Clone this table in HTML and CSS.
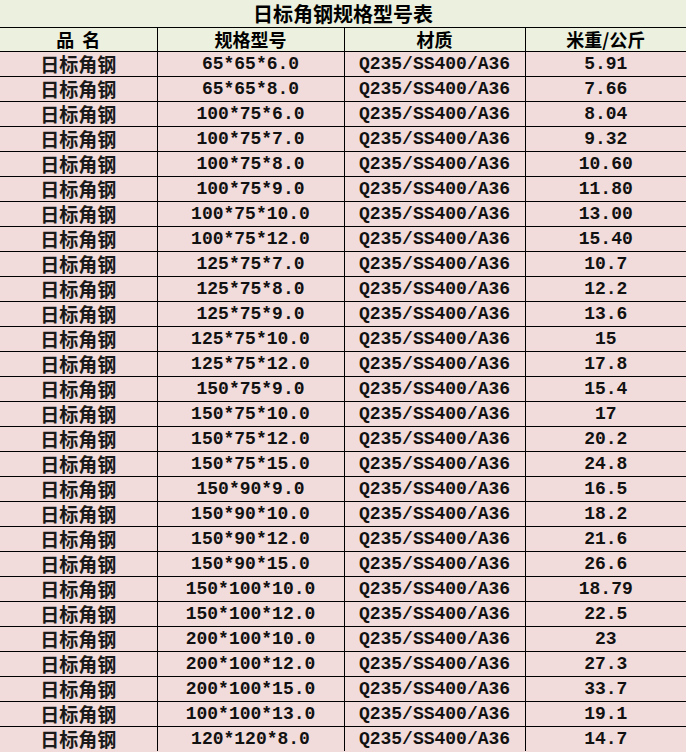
FILE: index.html
```html
<!DOCTYPE html>
<html lang="zh">
<head>
<meta charset="utf-8">
<title>日标角钢规格型号表</title>
<link rel="stylesheet" href="styles.css">
</head>
<body>
<table class="sheet">
  <colgroup>
    <col class="c1"><col class="c2"><col class="c3"><col class="c4">
  </colgroup>
  <thead>
    <tr class="title-row"><th colspan="4">日标角钢规格型号表</th></tr>
    <tr class="head-row"><th>品&nbsp;&nbsp;名</th><th>规格型号</th><th>材质</th><th>米重/公斤</th></tr>
  </thead>
  <tbody>
    <tr><td class="cn">日标角钢</td><td class="num">65*65*6.0</td><td class="num">Q235/SS400/A36</td><td class="num">5.91</td></tr>
    <tr><td class="cn">日标角钢</td><td class="num">65*65*8.0</td><td class="num">Q235/SS400/A36</td><td class="num">7.66</td></tr>
    <tr><td class="cn">日标角钢</td><td class="num">100*75*6.0</td><td class="num">Q235/SS400/A36</td><td class="num">8.04</td></tr>
    <tr><td class="cn">日标角钢</td><td class="num">100*75*7.0</td><td class="num">Q235/SS400/A36</td><td class="num">9.32</td></tr>
    <tr><td class="cn">日标角钢</td><td class="num">100*75*8.0</td><td class="num">Q235/SS400/A36</td><td class="num">10.60</td></tr>
    <tr><td class="cn">日标角钢</td><td class="num">100*75*9.0</td><td class="num">Q235/SS400/A36</td><td class="num">11.80</td></tr>
    <tr><td class="cn">日标角钢</td><td class="num">100*75*10.0</td><td class="num">Q235/SS400/A36</td><td class="num">13.00</td></tr>
    <tr><td class="cn">日标角钢</td><td class="num">100*75*12.0</td><td class="num">Q235/SS400/A36</td><td class="num">15.40</td></tr>
    <tr><td class="cn">日标角钢</td><td class="num">125*75*7.0</td><td class="num">Q235/SS400/A36</td><td class="num">10.7</td></tr>
    <tr><td class="cn">日标角钢</td><td class="num">125*75*8.0</td><td class="num">Q235/SS400/A36</td><td class="num">12.2</td></tr>
    <tr><td class="cn">日标角钢</td><td class="num">125*75*9.0</td><td class="num">Q235/SS400/A36</td><td class="num">13.6</td></tr>
    <tr><td class="cn">日标角钢</td><td class="num">125*75*10.0</td><td class="num">Q235/SS400/A36</td><td class="num">15</td></tr>
    <tr><td class="cn">日标角钢</td><td class="num">125*75*12.0</td><td class="num">Q235/SS400/A36</td><td class="num">17.8</td></tr>
    <tr><td class="cn">日标角钢</td><td class="num">150*75*9.0</td><td class="num">Q235/SS400/A36</td><td class="num">15.4</td></tr>
    <tr><td class="cn">日标角钢</td><td class="num">150*75*10.0</td><td class="num">Q235/SS400/A36</td><td class="num">17</td></tr>
    <tr><td class="cn">日标角钢</td><td class="num">150*75*12.0</td><td class="num">Q235/SS400/A36</td><td class="num">20.2</td></tr>
    <tr><td class="cn">日标角钢</td><td class="num">150*75*15.0</td><td class="num">Q235/SS400/A36</td><td class="num">24.8</td></tr>
    <tr><td class="cn">日标角钢</td><td class="num">150*90*9.0</td><td class="num">Q235/SS400/A36</td><td class="num">16.5</td></tr>
    <tr><td class="cn">日标角钢</td><td class="num">150*90*10.0</td><td class="num">Q235/SS400/A36</td><td class="num">18.2</td></tr>
    <tr><td class="cn">日标角钢</td><td class="num">150*90*12.0</td><td class="num">Q235/SS400/A36</td><td class="num">21.6</td></tr>
    <tr><td class="cn">日标角钢</td><td class="num">150*90*15.0</td><td class="num">Q235/SS400/A36</td><td class="num">26.6</td></tr>
    <tr><td class="cn">日标角钢</td><td class="num">150*100*10.0</td><td class="num">Q235/SS400/A36</td><td class="num">18.79</td></tr>
    <tr><td class="cn">日标角钢</td><td class="num">150*100*12.0</td><td class="num">Q235/SS400/A36</td><td class="num">22.5</td></tr>
    <tr><td class="cn">日标角钢</td><td class="num">200*100*10.0</td><td class="num">Q235/SS400/A36</td><td class="num">23</td></tr>
    <tr><td class="cn">日标角钢</td><td class="num">200*100*12.0</td><td class="num">Q235/SS400/A36</td><td class="num">27.3</td></tr>
    <tr><td class="cn">日标角钢</td><td class="num">200*100*15.0</td><td class="num">Q235/SS400/A36</td><td class="num">33.7</td></tr>
    <tr><td class="cn">日标角钢</td><td class="num">100*100*13.0</td><td class="num">Q235/SS400/A36</td><td class="num">19.1</td></tr>
    <tr><td class="cn">日标角钢</td><td class="num">120*120*8.0</td><td class="num">Q235/SS400/A36</td><td class="num">14.7</td></tr>
  </tbody>
</table>
</body>
</html>
```

FILE: styles.css
```css
html, body {
  margin: 0;
  padding: 0;
  background: #f2dcdb;
  overflow: hidden;
}

.sheet {
  width: 686px;
  border-collapse: collapse;
  table-layout: fixed;
  color: #000;
  font-family: "Noto Sans CJK SC", "Noto Sans", sans-serif;
}

.c1 { width: 157px; }
.c2 { width: 187px; }
.c3 { width: 181px; }
.c4 { width: 161px; }

.sheet th,
.sheet td {
  border: 1px solid #000;
  padding: 0;
  text-align: center;
  vertical-align: middle;
  white-space: nowrap;
}

.sheet tr > :first-child { border-left: none; }
.sheet tr > :last-child { border-right: none; }

.title-row th {
  border-top: none;
  height: 26px;
  background: #ebf1de;
  font-size: 20px;
  font-weight: 700;
  line-height: 26px;
  padding-top: 1px;
}

.head-row th {
  height: 23px;
  background: #ebf1de;
  font-size: 18px;
  font-weight: 700;
  line-height: 23px;
}

.sheet tbody td {
  height: 24px;
  background: #f2dcdb;
  line-height: 24px;
}

.sheet tbody tr:last-child td { border-bottom: none; }

.cn {
  font-size: 19px;
  font-weight: 700;
  color: #1a1a1a;
}

.num {
  font-family: "Liberation Mono", "DejaVu Sans Mono", monospace;
  font-size: 18px;
  font-weight: 700;
  color: #111;
  padding-top: 1px;
}
```
